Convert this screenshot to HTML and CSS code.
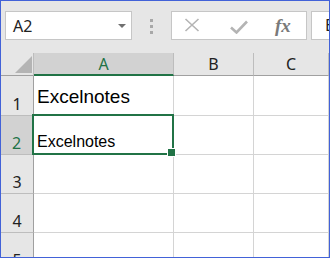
FILE: index.html
```html
<!DOCTYPE html>
<html lang="en">

<head>
    <meta charset="UTF-8">
    <meta name="viewport" content="width=device-width, initial-scale=1.0">
    <title>Excelnotes</title>

    <link rel="stylesheet" href="styles.css">

</head>

<body>
    <div class="window">

        <div class="formula-bar">
            <div class="name-box">
                <span class="name-text">A2</span>
                <span class="caret"></span>
            </div>

            <div class="grip">
                <i></i>
                <i></i>
                <i></i>
            </div>

            <div class="fx-buttons">
                <svg class="icon-cancel" width="16" height="14" viewBox="0 0 16 14">
                    <path d="M1.5 1 L14.5 13 M14.5 1 L1.5 13" stroke="#b4b4b4" stroke-width="1.6" fill="none" />
                </svg>
                <svg class="icon-enter" width="18" height="14" viewBox="0 0 18 14">
                    <path d="M1 7.5 L6.5 12.5 L17 1.5" stroke="#b4b4b4" stroke-width="2.6" fill="none" />
                </svg>
                <span class="fx">fx</span>
            </div>

            <div class="formula-input">Excelnotes</div>
        </div>

        <div class="sheet">
            <div class="corner"><span class="triangle"></span></div>
            <div class="col-head active">A</div>
            <div class="col-head">B</div>
            <div class="col-head">C</div>

            <div class="row-head">1</div>
            <div class="cell title">Excelnotes</div>
            <div class="cell"></div>
            <div class="cell"></div>

            <div class="row-head active">2</div>
            <div class="cell text selected">Excelnotes</div>
            <div class="cell"></div>
            <div class="cell"></div>

            <div class="row-head">3</div>
            <div class="cell"></div>
            <div class="cell"></div>
            <div class="cell"></div>

            <div class="row-head">4</div>
            <div class="cell"></div>
            <div class="cell"></div>
            <div class="cell"></div>

            <div class="row-head">5</div>
            <div class="cell"></div>
            <div class="cell"></div>
            <div class="cell"></div>
        </div>

    </div>
</body>

</html>
```

FILE: styles.css
```css
* {
    margin: 0;
    padding: 0;
    box-sizing: border-box;
    font-family: "Noto Sans", sans-serif;
}

body {
    background: #fff;
}

.window {
    width: 330px;
    height: 258px;
    border: 1px solid #4262d8;
    background: #e6e6e6;
    display: flex;
    flex-direction: column;
    overflow: hidden;
}

/* formula bar */

.formula-bar {
    height: 52px;
    flex-shrink: 0;
    display: flex;
    align-items: flex-start;
    padding: 10px 0 0 4px;
    overflow: hidden;
}

.name-box {
    width: 127px;
    height: 29px;
    flex-shrink: 0;
    display: flex;
    align-items: center;
    justify-content: space-between;
    padding: 0 5px 0 7px;
    background: #fff;
    border: 1px solid #c6c6c6;
}

.name-text {
    font-size: 16px;
    color: #222;
}

.caret {
    width: 0;
    height: 0;
    border-left: 4px solid transparent;
    border-right: 4px solid transparent;
    border-top: 4px solid #707070;
}

.grip {
    width: 39px;
    flex-shrink: 0;
    display: flex;
    flex-direction: column;
    gap: 3px;
    padding: 8px 0 0 18px;
}

.grip i {
    display: block;
    width: 3px;
    height: 3px;
    background: #a8a8a8;
}

.fx-buttons {
    width: 136px;
    height: 29px;
    flex-shrink: 0;
    display: flex;
    align-items: center;
    background: #fff;
    border: 1px solid #c6c6c6;
    padding-left: 12px;
}

.icon-cancel {
    margin-top: -2px;
}

.icon-enter {
    margin-left: 30px;
    margin-top: 2px;
}

.fx {
    margin-left: 27px;
    font-family: "Liberation Serif", serif;
    font-style: italic;
    font-weight: bold;
    font-size: 19px;
    color: #7a7a7a;
}

.formula-input {
    width: 200px;
    height: 29px;
    flex-shrink: 0;
    margin-left: 4px;
    padding-left: 13px;
    background: #fff;
    border: 1px solid #c6c6c6;
    font-size: 16px;
    line-height: 27px;
    color: #222;
}

/* sheet */

.sheet {
    flex: 1;
    display: grid;
    grid-template-columns: 33px 140px 80px 75px;
    grid-template-rows: 23px 40px 39px 39px 39px 39px;
    background: #fff;
    overflow: hidden;
}

.corner {
    display: flex;
    align-items: flex-end;
    justify-content: flex-end;
    padding: 0 1px 2px 0;
    background: #e6e6e6;
    border-right: 1px solid #bdbdbd;
    border-bottom: 1px solid #a0a0a0;
}

.triangle {
    width: 0;
    height: 0;
    border-left: 17px solid transparent;
    border-bottom: 17px solid #b4b4b4;
}

.col-head {
    display: flex;
    align-items: center;
    justify-content: center;
    background: #e6e6e6;
    border-right: 1px solid #bdbdbd;
    border-bottom: 1px solid #a0a0a0;
    font-size: 16px;
    color: #222;
}

.row-head {
    display: flex;
    align-items: flex-end;
    justify-content: center;
    padding-bottom: 3px;
    background: #e6e6e6;
    border-right: 1px solid #a0a0a0;
    border-bottom: 1px solid #bdbdbd;
    font-size: 16px;
    line-height: 1;
    color: #222;
}

.col-head.active {
    background: #d2d2d2;
    border-bottom: 2px solid #217346;
    color: #217346;
}

.row-head.active {
    background: #d2d2d2;
    border-right: 2px solid #217346;
    color: #217346;
}

.cell {
    border-right: 1px solid #d4d4d4;
    border-bottom: 1px solid #d4d4d4;
    color: #000;
    white-space: nowrap;
}

.cell.title {
    font-family: "Liberation Sans", Arial, sans-serif;
    font-size: 19px;
    line-height: 19px;
    padding: 11px 0 0 3px;
}

.cell.text {
    font-family: "Liberation Sans", Arial, sans-serif;
    font-size: 16px;
    line-height: 16px;
    padding: 18px 0 0 3px;
}

.cell.selected {
    position: relative;
}

.cell.selected::before {
    content: "";
    position: absolute;
    top: -2px;
    left: -2px;
    right: -1px;
    bottom: -1px;
    border: 2px solid #217346;
}

.cell.selected::after {
    content: "";
    position: absolute;
    right: -3px;
    bottom: -3px;
    width: 7px;
    height: 7px;
    background: #217346;
    border: 1px solid #fff;
}
```
